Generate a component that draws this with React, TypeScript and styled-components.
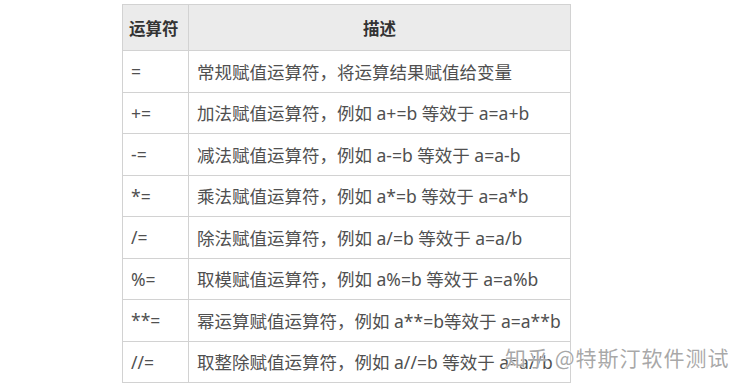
import React from 'react';
import styled, { createGlobalStyle } from 'styled-components';

interface Row {
  op: string;
  desc: string;
}

const rows: Row[] = [
  { op: '=', desc: '常规赋值运算符，将运算结果赋值给变量' },
  { op: '+=', desc: '加法赋值运算符，例如 a+=b 等效于 a=a+b' },
  { op: '-=', desc: '减法赋值运算符，例如 a-=b 等效于 a=a-b' },
  { op: '*=', desc: '乘法赋值运算符，例如 a*=b 等效于 a=a*b' },
  { op: '/=', desc: '除法赋值运算符，例如 a/=b 等效于 a=a/b' },
  { op: '%=', desc: '取模赋值运算符，例如 a%=b 等效于 a=a%b' },
  { op: '**=', desc: '幂运算赋值运算符，例如 a**=b等效于 a=a**b' },
  { op: '//=', desc: '取整除赋值运算符，例如 a//=b 等效于 a=a//b' },
];

const GlobalStyle = createGlobalStyle`
  html, body {
    margin: 0;
    padding: 0;
    background: #fff;
  }
  body {
    width: 752px;
    height: 390px;
    overflow: hidden;
    font-family: "Noto Sans", "Noto Sans CJK SC", sans-serif;
  }
`;

const Page = styled.div`
  position: relative;
  width: 752px;
  height: 390px;
  padding: 4px 0 0 122px;
  box-sizing: border-box;
`;

const Table = styled.table`
  width: 449px;
  border-collapse: collapse;
  table-layout: fixed;
  color: #505050;
  font-size: 17.5px;
`;

const HeadRow = styled.tr`
  height: 46px;
  background: #ebebeb;
`;

const HeadCell = styled.th<{ $center?: boolean }>`
  border: 1px solid #d2d2d2;
  padding: 0 ${(p) => (p.$center ? 8 : 6)}px;
  text-align: ${(p) => (p.$center ? 'center' : 'left')};
  font-weight: 700;
  font-size: 16.5px;
  color: #333;
  white-space: nowrap;
`;

const BodyRow = styled.tr`
  height: 41.5px;
`;

const Cell = styled.td`
  border: 1px solid #d2d2d2;
  padding: 0 8px;
  white-space: nowrap;
  overflow: hidden;
`;

const Watermark = styled.div`
  position: absolute;
  left: 505px;
  top: 342px;
  font-size: 21px;
  letter-spacing: 1px;
  color: rgba(140, 140, 140, 0.75);
  text-shadow: 0 0 1px #fff, 0 0 2px #fff;
  font-family: "Noto Sans CJK SC", sans-serif;
  white-space: nowrap;
  pointer-events: none;
`;

export default function App() {
  return (
    <Page>
      <GlobalStyle />
      <Table>
        <colgroup>
          <col style={{ width: 66 }} />
          <col />
        </colgroup>
        <thead>
          <HeadRow>
            <HeadCell>运算符</HeadCell>
            <HeadCell $center>描述</HeadCell>
          </HeadRow>
        </thead>
        <tbody>
          {rows.map((r) => (
            <BodyRow key={r.op}>
              <Cell>{r.op}</Cell>
              <Cell>{r.desc}</Cell>
            </BodyRow>
          ))}
        </tbody>
      </Table>
      <Watermark>知乎 @特斯汀软件测试</Watermark>
    </Page>
  );
}
